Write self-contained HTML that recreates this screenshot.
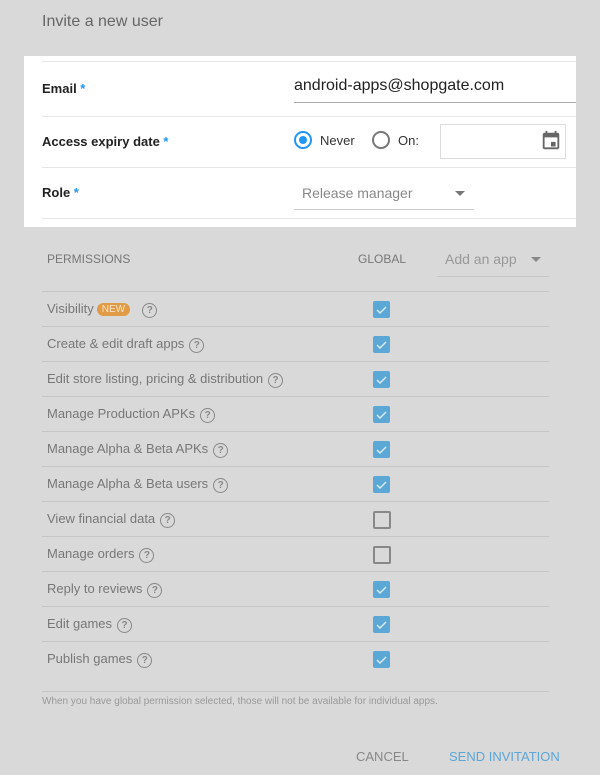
<!DOCTYPE html>
<html><head><style>
body{margin:0;width:600px;height:775px;background:#d9d9d9;font-family:"Liberation Sans",sans-serif;position:relative;overflow:hidden}
.a{position:absolute}
.title{left:42px;top:13px;font-size:16px;color:#666}
.panel{left:24px;top:56px;width:552px;height:171px;background:#fff}
.hl{position:absolute;height:1px;background:#e6e6e6}
.lbl{position:absolute;left:42px;font-size:13px;font-weight:bold;color:#222}
.lbl b{color:#2196f3}
.row{position:absolute;left:42px;width:507px;height:35px;border-top:1px solid #c6c6c6}
.row span.t{position:absolute;left:5px;top:9px;font-size:13px;color:#777;white-space:nowrap}
.q{display:inline-block;width:13px;height:13px;border:1.5px solid #888;border-radius:50%;font-size:10px;line-height:13px;text-align:center;color:#888;margin-left:5px;vertical-align:0;font-weight:bold}
.cb{position:absolute;left:331px;top:9px;width:17px;height:17px;border-radius:2px;background:#5ba7d6}
.cb.off{background:transparent;border:2px solid #888;width:14px;height:14px;left:331px}
.new{display:inline-block;background:#e19a46;color:#fbe6cc;font-size:10px;border-radius:8px;padding:1px 5px;margin-left:3px;vertical-align:1px}
</style></head><body>
<div class="a title">Invite a new user</div>
<div class="a panel"></div>
<div class="hl" style="left:42px;top:61px;width:534px"></div>
<div class="hl" style="left:42px;top:116px;width:534px"></div>
<div class="hl" style="left:42px;top:167px;width:534px"></div>
<div class="hl" style="left:42px;top:218px;width:534px"></div>
<div class="lbl" style="top:81px">Email <b>*</b></div>
<div class="a" style="left:294px;top:77px;font-size:16px;color:#222">android-apps@shopgate.com</div>
<div class="a" style="left:294px;top:102px;width:282px;height:1px;background:#aaa"></div>
<div class="lbl" style="top:134px">Access expiry date <b>*</b></div>
<div class="a" style="left:294px;top:131px;width:14px;height:14px;border:2px solid #2196f3;border-radius:50%"></div>
<div class="a" style="left:299px;top:136px;width:8px;height:8px;background:#2196f3;border-radius:50%"></div>
<div class="a" style="left:320px;top:133px;font-size:13px;color:#333">Never</div>
<div class="a" style="left:372px;top:131px;width:14px;height:14px;border:2px solid #777;border-radius:50%"></div>
<div class="a" style="left:398px;top:133px;font-size:13px;color:#333">On:</div>
<div class="a" style="left:440px;top:124px;width:124px;height:33px;border:1px solid #ddd"></div>
<svg class="a" style="left:540px;top:130px" width="22" height="22" viewBox="0 0 24 24"><path fill="#666" d="M19 3h-1V1h-2v2H8V1H6v2H5c-1.1 0-2 .9-2 2v14c0 1.1.9 2 2 2h14c1.1 0 2-.9 2-2V5c0-1.1-.9-2-2-2zm0 16H5V8h14v11zM12 13h5v5h-5z"/></svg>
<div class="lbl" style="top:185px">Role <b>*</b></div>
<div class="a" style="left:302px;top:185px;font-size:14px;color:#888">Release manager</div>
<div class="a" style="left:455px;top:191px;border:5px solid transparent;border-top-color:#777;border-bottom:0"></div>
<div class="a" style="left:294px;top:209px;width:180px;height:1px;background:#ccc"></div>

<div class="a" style="left:47px;top:252px;font-size:12px;color:#777">PERMISSIONS</div>
<div class="a" style="left:358px;top:252px;font-size:12px;color:#777">GLOBAL</div>
<div class="a" style="left:445px;top:251px;font-size:14px;color:#999">Add an app</div>
<div class="a" style="left:531px;top:257px;border:5px solid transparent;border-top-color:#888;border-bottom:0"></div>
<div class="a" style="left:437px;top:276px;width:112px;height:1px;background:#c6c6c6"></div>

<div class="row" style="top:291px"><span class="t">Visibility<span class="new">NEW</span> &nbsp;<span class="q">?</span></span><div class="cb"><svg width="17" height="17"><path d="M4 9l3 3 6-6" stroke="#dbeaf4" stroke-width="1.5" fill="none"/></svg></div></div>
<div class="row" style="top:326px"><span class="t">Create &amp; edit draft apps<span class="q">?</span></span><div class="cb"><svg width="17" height="17"><path d="M4 9l3 3 6-6" stroke="#dbeaf4" stroke-width="1.5" fill="none"/></svg></div></div>
<div class="row" style="top:361px"><span class="t">Edit store listing, pricing &amp; distribution<span class="q">?</span></span><div class="cb"><svg width="17" height="17"><path d="M4 9l3 3 6-6" stroke="#dbeaf4" stroke-width="1.5" fill="none"/></svg></div></div>
<div class="row" style="top:396px"><span class="t">Manage Production APKs<span class="q">?</span></span><div class="cb"><svg width="17" height="17"><path d="M4 9l3 3 6-6" stroke="#dbeaf4" stroke-width="1.5" fill="none"/></svg></div></div>
<div class="row" style="top:431px"><span class="t">Manage Alpha &amp; Beta APKs<span class="q">?</span></span><div class="cb"><svg width="17" height="17"><path d="M4 9l3 3 6-6" stroke="#dbeaf4" stroke-width="1.5" fill="none"/></svg></div></div>
<div class="row" style="top:466px"><span class="t">Manage Alpha &amp; Beta users<span class="q">?</span></span><div class="cb"><svg width="17" height="17"><path d="M4 9l3 3 6-6" stroke="#dbeaf4" stroke-width="1.5" fill="none"/></svg></div></div>
<div class="row" style="top:501px"><span class="t">View financial data<span class="q">?</span></span><div class="cb off"></div></div>
<div class="row" style="top:536px"><span class="t">Manage orders<span class="q">?</span></span><div class="cb off"></div></div>
<div class="row" style="top:571px"><span class="t">Reply to reviews<span class="q">?</span></span><div class="cb"><svg width="17" height="17"><path d="M4 9l3 3 6-6" stroke="#dbeaf4" stroke-width="1.5" fill="none"/></svg></div></div>
<div class="row" style="top:606px"><span class="t">Edit games<span class="q">?</span></span><div class="cb"><svg width="17" height="17"><path d="M4 9l3 3 6-6" stroke="#dbeaf4" stroke-width="1.5" fill="none"/></svg></div></div>
<div class="row" style="top:641px"><span class="t">Publish games<span class="q">?</span></span><div class="cb"><svg width="17" height="17"><path d="M4 9l3 3 6-6" stroke="#dbeaf4" stroke-width="1.5" fill="none"/></svg></div></div>
<div class="a" style="left:42px;top:691px;width:507px;height:1px;background:#c6c6c6"></div>
<div class="a" style="left:42px;top:696px;font-size:10px;color:#999">When you have global permission selected, those will not be available for individual apps.</div>
<div class="a" style="left:356px;top:749px;font-size:13px;color:#888">CANCEL</div>
<div class="a" style="left:449px;top:749px;font-size:13px;color:#5ba7d6">SEND INVITATION</div>
</body></html>
